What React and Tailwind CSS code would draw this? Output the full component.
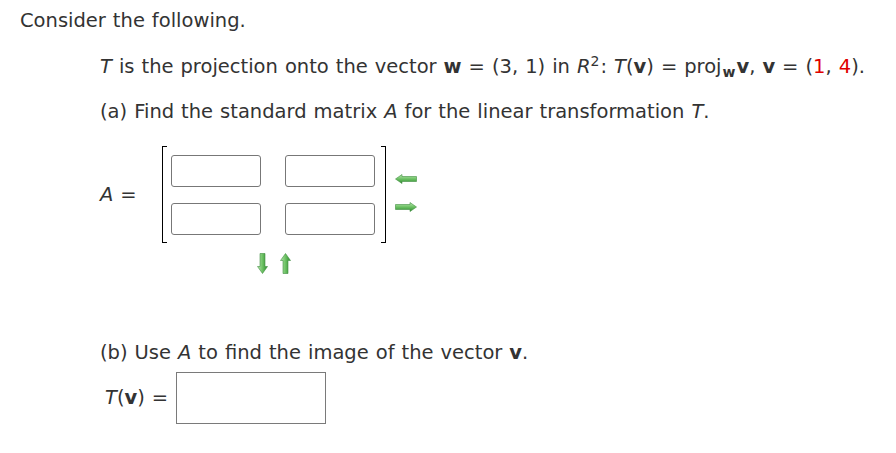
const font = { fontFamily: '"DejaVu Sans", Verdana, sans-serif', wordSpacing: '0.8px' };

const HArrow = ({ dir }) => (
  <svg width="22" height="10" viewBox="0 0 22 10" className="block">
    <defs>
      <linearGradient id={`hg-${dir}`} x1="0" y1="0" x2="0" y2="1">
        <stop offset="0" stopColor="#b9e6b0" />
        <stop offset="0.5" stopColor="#6cc163" />
        <stop offset="1" stopColor="#2f8a31" />
      </linearGradient>
    </defs>
    <polygon
      points={dir === 'left' ? '0.5,5 7,0.5 7,2.5 21.5,2.5 21.5,7.5 7,7.5 7,9.5' : '21.5,5 15,0.5 15,2.5 0.5,2.5 0.5,7.5 15,7.5 15,9.5'}
      fill={`url(#hg-${dir})`}
      stroke="#3f8f3f"
      strokeWidth="0.6"
    />
  </svg>
);

const VArrow = ({ dir }) => (
  <svg width="11" height="21" viewBox="0 0 11 21" className="block">
    <defs>
      <linearGradient id={`vg-${dir}`} x1="0" y1="0" x2="1" y2="0">
        <stop offset="0" stopColor="#b9e6b0" />
        <stop offset="0.5" stopColor="#6cc163" />
        <stop offset="1" stopColor="#2f8a31" />
      </linearGradient>
    </defs>
    <polygon
      points={dir === 'down' ? '5.5,20.5 0.5,13.5 3,13.5 3,0.5 8,0.5 8,13.5 10.5,13.5' : '5.5,0.5 0.5,7.5 3,7.5 3,20.5 8,20.5 8,7.5 10.5,7.5'}
      fill={`url(#vg-${dir})`}
      stroke="#3f8f3f"
      strokeWidth="0.6"
    />
  </svg>
);

const Cell = () => <div className="w-[90px] h-[32px] border border-[#777] rounded-[3px] bg-white" />;

export default function App() {
  return (
    <div className="w-[896px] h-[453px] bg-white text-[#333] overflow-hidden text-[19.5px] leading-[24px]" style={font}>
      <div className="pl-[20px] pt-[9px]">Consider the following.</div>

      <div className="pl-[100px]">
        <p className="mt-[22px] whitespace-nowrap">
          <i>T</i> is the projection onto the vector <b>w</b> = (3, 1) in <i>R</i>
          <sup className="text-[14px] pr-[1px]">2</sup>: <i>T</i>(<b>v</b>) = proj
          <sub className="text-[14px] font-bold px-[1px]">w</sub>
          <b>v</b>, <b>v</b> = (<span className="text-[#e00000]">1</span>, <span className="text-[#e00000]">4</span>).
        </p>

        <p className="mt-[21px]">
          (a) Find the standard matrix <i>A</i> for the linear transformation <i>T</i>.
        </p>

        <div className="mt-[22px] flex items-center">
          <span className="w-[60px]">
            <i>A</i> =
          </span>
          <div className="flex items-stretch ml-[2px]">
            <div className="w-[5px] border-l border-y border-black" />
            <div className="grid grid-cols-2 gap-x-[24px] gap-y-[16px] pt-[9px] pb-[8px] pl-[4px] pr-[6px]">
              <Cell />
              <Cell />
              <Cell />
              <Cell />
            </div>
            <div className="w-[5px] border-r border-y border-black" />
          </div>
          <div className="ml-[9px] self-start pt-[28px] flex flex-col gap-[18px]">
            <HArrow dir="left" />
            <HArrow dir="right" />
          </div>
        </div>

        <div className="mt-[10px] flex gap-[12px] pl-[157px]">
          <VArrow dir="down" />
          <VArrow dir="up" />
        </div>

        <p className="mt-[67px]">
          (b) Use <i>A</i> to find the image of the vector <b>v</b>.
        </p>

        <div className="mt-[7px] flex items-center">
          <span className="w-[76px] pl-[5px]">
            <i>T</i>(<b>v</b>) =
          </span>
          <div className="w-[150px] h-[52px] border border-[#7a7a7a]" />
        </div>
      </div>
    </div>
  );
}
